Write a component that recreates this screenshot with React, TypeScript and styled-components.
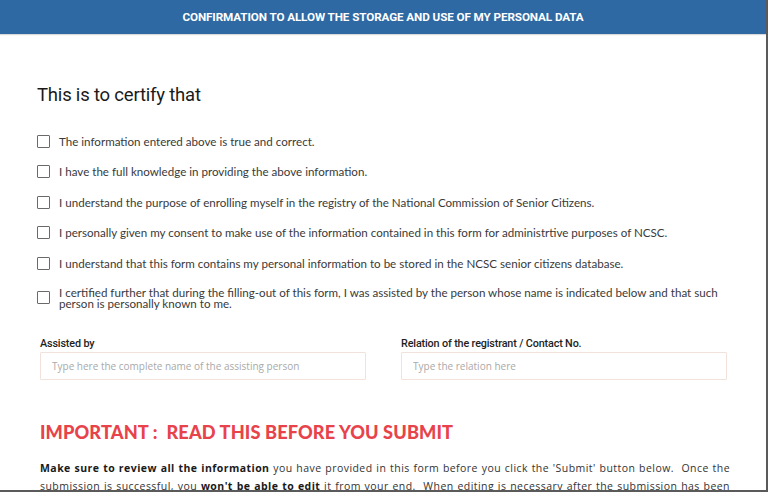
import React from "react";
import styled, { createGlobalStyle } from "styled-components";

const Global = createGlobalStyle`
  html, body { margin: 0; padding: 0; background: #ffffff; }
  body { font-family: Lato, "Noto Sans", sans-serif; }
  * { box-sizing: border-box; }
`;

const Page = styled.div`
  width: 768px;
  height: 492px;
  overflow: hidden;
  border-right: 2px solid #5a5a5a;
  border-bottom: 2px solid #5a5a5a;
  background: #fff;
  display: flex;
  flex-direction: column;
`;

const Header = styled.header`
  height: 34px;
  flex: none;
  background: #2e69a3;
  display: flex;
  align-items: center;
  justify-content: center;
  color: #ffffff;
  font-family: Roboto, "Liberation Sans", sans-serif;
  font-weight: 700;
  font-size: 11.7px;
  letter-spacing: -0.1px;
  box-shadow: 0 1px 1px rgba(0, 0, 0, 0.15);
`;

const Body = styled.main`
  padding: 50px 36px 0 37px;
  display: flex;
  flex-direction: column;
`;

const Title = styled.h1`
  margin: 0;
  font-family: Roboto, "Liberation Sans", sans-serif;
  font-weight: 400;
  font-size: 18.5px;
  line-height: 22px;
  letter-spacing: -0.2px;
  color: #1a1a1a;
`;

const CheckList = styled.ul`
  list-style: none;
  margin: 28px 0 0;
  padding: 0;
  display: flex;
  flex-direction: column;
  gap: 16.5px;
`;

const CheckRow = styled.li`
  display: flex;
  align-items: center;
  gap: 9px;
  min-height: 14px;
`;

const Box = styled.span`
  flex: none;
  width: 13px;
  height: 13px;
  border: 1.5px solid #6a6a6a;
  border-radius: 1px;
  background: #fff;
`;

const CheckText = styled.span`
  font-family: Lato, "Noto Sans", sans-serif;
  font-size: 11.6px;
  line-height: 11px;
  color: #3a3a3a;
  max-width: 662px;
`;

const Fields = styled.div`
  margin: 28px 0 0 3px;
  display: grid;
  grid-template-columns: 326px 326px;
  column-gap: 35px;
`;

const Field = styled.label`
  display: flex;
  flex-direction: column;
  gap: 1px;
`;

const FieldLabel = styled.span`
  font-family: Roboto, "Noto Sans", sans-serif;
  font-weight: 500;
  font-size: 10.8px;
  line-height: 14px;
  color: #1e1e1e;
  letter-spacing: -0.15px;
`;

const Input = styled.input`
  height: 28px;
  width: 100%;
  border: 1px solid #f1e3dc;
  border-radius: 1px;
  padding: 0 11px;
  font-family: "Open Sans", Lato, sans-serif;
  font-size: 10px;
  color: #333;
  outline: none;
  &::placeholder {
    color: #a9a9a9;
  }
`;

const Important = styled.h2`
  margin: 41px 0 0 3px;
  font-family: Lato, "Noto Sans", sans-serif;
  font-weight: 900;
  font-size: 18.2px;
  line-height: 22px;
  color: #e8434b;
  letter-spacing: 0.1px;
`;

const Para = styled.p`
  margin: 16px 0 0 3px;
  font-family: "Open Sans", Lato, sans-serif;
  font-size: 10.5px;
  line-height: 18.5px;
  letter-spacing: 0.45px;
  color: #333;
  text-align: justify;
  b {
    font-weight: 700;
    color: #1a1a1a;
  }
`;

const items = [
  "The information entered above is true and correct.",
  "I have the full knowledge in providing the above information.",
  "I understand the purpose of enrolling myself in the registry of the National Commission of Senior Citizens.",
  "I personally given my consent to make use of the information contained in this form for administrtive purposes of NCSC.",
  "I understand that this form contains my personal information to be stored in the NCSC senior citizens database.",
  "I certified further that during the filling-out of this form, I was assisted by the person whose name is indicated below and that such person is personally known to me.",
];

export default function App() {
  return (
    <>
      <Global />
      <Page>
        <Header>CONFIRMATION TO ALLOW THE STORAGE AND USE OF MY PERSONAL DATA</Header>
        <Body>
          <Title>This is to certify that</Title>
          <CheckList>
            {items.map((t) => (
              <CheckRow key={t}>
                <Box />
                <CheckText>{t}</CheckText>
              </CheckRow>
            ))}
          </CheckList>
          <Fields>
            <Field>
              <FieldLabel>Assisted by</FieldLabel>
              <Input placeholder="Type here the complete name of the assisting person" />
            </Field>
            <Field>
              <FieldLabel>Relation of the registrant / Contact No.</FieldLabel>
              <Input placeholder="Type the relation here" />
            </Field>
          </Fields>
          <Important>IMPORTANT :&nbsp; READ THIS BEFORE YOU SUBMIT</Important>
          <Para>
            <b>Make sure to review all the information</b> you have provided in this form before you click the
            'Submit' button below.&nbsp; Once the submission is successful, you <b>won't be able to edit</b> it from
            your end.&nbsp; When editing is necessary after the submission has been made, please contact the NCSC
            office for assistance.
          </Para>
        </Body>
      </Page>
    </>
  );
}
